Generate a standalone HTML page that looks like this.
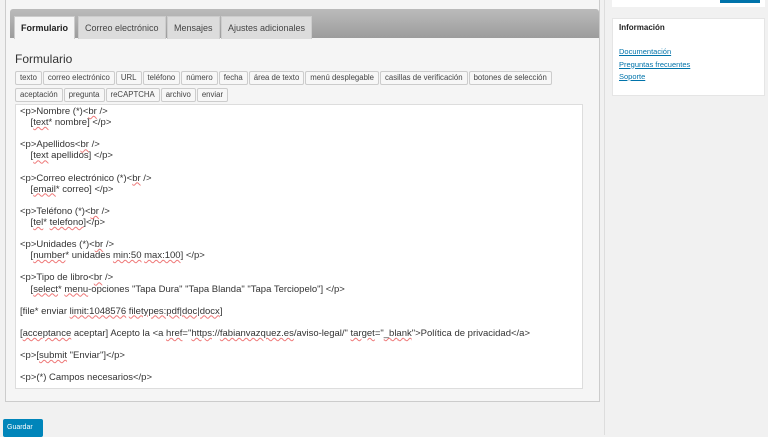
<!DOCTYPE html><html><head><meta charset="utf-8"><style>
*{box-sizing:border-box;margin:0;padding:0}
body{width:768px;height:435px;background:#f1f1f1;font-family:"Liberation Sans",sans-serif;position:relative;overflow:hidden}
.box{position:absolute;left:5px;top:-2px;width:595px;height:404px;border:1px solid #ccc;background:#f5f5f5}
.hdr{position:absolute;left:4px;top:10px;width:589px;height:29px;background:linear-gradient(#bbb,#9c9c9c);border-radius:3px 3px 0 0}
.tab{position:absolute;top:16px;height:23px;background:#dcdcdc;border:1px solid #ccc;border-bottom:none;font-size:9px;color:#444;line-height:22px;padding:0 6px}
.tab.a{background:#f5f5f5;font-weight:bold;color:#222}
h2{position:absolute;left:15px;top:52px;font-weight:normal;font-size:12px;color:#333}
.btns{position:absolute;left:15px;top:71px;width:580px;font-size:7.8px;white-space:nowrap}
.btns span{display:inline-block;height:14px;line-height:12px;padding:0 4px;border:1px solid #ccc;background:#f7f7f7;color:#444;margin:0 1px 3px 0;border-radius:2px}
.ta{position:absolute;left:15px;top:104px;width:568px;height:285px;background:#fff;border:1px solid #ddd;font-size:9.5px;color:#333;line-height:11.1px;padding:1px 4px;white-space:pre;overflow:hidden}
.u{text-decoration:underline wavy #e77;text-decoration-thickness:1px;text-underline-offset:1px}
.side1{position:absolute;left:612px;top:-2px;width:153px;height:9px;background:#fff}
.blue{position:absolute;left:720px;top:-2px;width:40px;height:5px;background:#0073aa}
.info{position:absolute;left:612px;top:18px;width:153px;height:78px;background:#fff;border:1px solid #e5e5e5;padding:4px 6px;font-size:7.5px}
.info b{display:block;color:#222;margin-bottom:14px;font-size:8px}
.info a{display:block;color:#0073aa;text-decoration:underline;line-height:12.5px}
.g{position:absolute;left:3px;top:419px;width:40px;height:18px;background:#0085ba;border-radius:2px;color:#fff;font-size:7px;padding:5px 4px}
.sep{position:absolute;left:604px;top:0;width:1px;height:435px;background:#ddd}
</style></head><body>
<div class="box"><div class="hdr"></div></div>
<div class="tab a" style="left:14px">Formulario</div>
<div class="tab" style="left:78px">Correo electrónico</div>
<div class="tab" style="left:167px">Mensajes</div>
<div class="tab" style="left:221px">Ajustes adicionales</div>
<h2>Formulario</h2>
<div class="btns"><span>texto</span><span>correo electrónico</span><span>URL</span><span>teléfono</span><span>número</span><span>fecha</span><span>área de texto</span><span>menú desplegable</span><span>casillas de verificación</span><span>botones de selección</span><br><span>aceptación</span><span>pregunta</span><span>reCAPTCHA</span><span>archivo</span><span>enviar</span></div>
<div class="ta">&lt;p&gt;Nombre (*)&lt;<span class="u">br</span> /&gt;
    [<span class="u">text</span>* nombre] &lt;/p&gt;

&lt;p&gt;Apellidos&lt;<span class="u">br</span> /&gt;
    [<span class="u">text</span> apellidos] &lt;/p&gt;

&lt;p&gt;Correo electrónico (*)&lt;<span class="u">br</span> /&gt;
    [<span class="u">email</span>* correo] &lt;/p&gt;

&lt;p&gt;Teléfono (*)&lt;<span class="u">br</span> /&gt;
    [<span class="u">tel</span>* <span class="u">telefono</span>]&lt;/p&gt;

&lt;p&gt;Unidades (*)&lt;<span class="u">br</span> /&gt;
    [<span class="u">number</span>* unidades <span class="u">min:50</span> <span class="u">max:100</span>] &lt;/p&gt;

&lt;p&gt;Tipo de libro&lt;<span class="u">br</span> /&gt;
    [<span class="u">select</span>* <span class="u">menu</span>-opciones "Tapa Dura" "Tapa Blanda" "Tapa Terciopelo"] &lt;/p&gt;

[file* enviar <span class="u">limit:1048576</span> <span class="u">filetypes:pdf|doc|docx</span>]

[<span class="u">acceptance</span> aceptar] Acepto la &lt;a <span class="u">href</span>="<span class="u">https</span>://<span class="u">fabianvazquez.es</span>/aviso-legal/" <span class="u">target</span>="<span class="u">_blank</span>"&gt;Política de privacidad&lt;/a&gt;

&lt;p&gt;[<span class="u">submit</span> "Enviar"]&lt;/p&gt;

&lt;p&gt;(*) Campos necesarios&lt;/p&gt;</div>
<div class="sep"></div>
<div class="side1"></div><div class="blue"></div>
<div class="info"><b>Información</b><a>Documentación</a><a>Preguntas frecuentes</a><a>Soporte</a></div>
<div class="g">Guardar</div>
</body></html>
